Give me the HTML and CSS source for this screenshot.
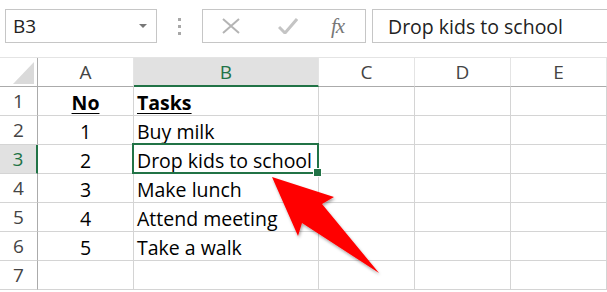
FILE: index.html
```html
<!DOCTYPE html>
<html lang="en">
<head>
    <meta charset="UTF-8">
    <meta name="viewport" content="width=device-width, initial-scale=1.0">
    <title>Tasks</title>
    <link rel="stylesheet" href="styles.css">
</head>
<body>

    <!-- Barra de nombre y fórmula -->
    <div class="barra">
        <div class="nombre">
            <span>B3</span>
            <span class="flecha"></span>
        </div>
        <div class="puntos">
            <i></i><i></i><i></i>
        </div>
        <div class="botones">
            <svg class="icono" width="18" height="16" viewBox="0 0 18 16">
                <path d="M1 1 L17 15 M17 1 L1 15" stroke="#b4b4b4" stroke-width="2" fill="none"/>
            </svg>
            <svg class="icono" width="20" height="16" viewBox="0 0 20 16">
                <path d="M1 9 L7 15 L19 1" stroke="#c4c4c4" stroke-width="3" fill="none"/>
            </svg>
            <span class="fx">fx</span>
        </div>
        <div class="formula">Drop kids to school</div>
    </div>

    <!-- Hoja -->
    <div class="hoja">
        <div class="esquina"><span class="triangulo"></span></div>
        <div class="col">A</div>
        <div class="col sel">B</div>
        <div class="col">C</div>
        <div class="col">D</div>
        <div class="col">E</div>

        <div class="fila">1</div>
        <div class="celda centro"><b><u>No</u></b></div>
        <div class="celda"><b><u>Tasks</u></b></div>
        <div class="celda"></div>
        <div class="celda"></div>
        <div class="celda"></div>

        <div class="fila">2</div>
        <div class="celda centro">1</div>
        <div class="celda">Buy milk</div>
        <div class="celda"></div>
        <div class="celda"></div>
        <div class="celda"></div>

        <div class="fila sel">3</div>
        <div class="celda centro">2</div>
        <div class="celda activa">Drop kids to school</div>
        <div class="celda"></div>
        <div class="celda"></div>
        <div class="celda"></div>

        <div class="fila">4</div>
        <div class="celda centro">3</div>
        <div class="celda">Make lunch</div>
        <div class="celda"></div>
        <div class="celda"></div>
        <div class="celda"></div>

        <div class="fila">5</div>
        <div class="celda centro">4</div>
        <div class="celda">Attend meeting</div>
        <div class="celda"></div>
        <div class="celda"></div>
        <div class="celda"></div>

        <div class="fila">6</div>
        <div class="celda centro">5</div>
        <div class="celda">Take a walk</div>
        <div class="celda"></div>
        <div class="celda"></div>
        <div class="celda"></div>

        <div class="fila">7</div>
        <div class="celda"></div>
        <div class="celda"></div>
        <div class="celda"></div>
        <div class="celda"></div>
        <div class="celda"></div>
    </div>

    <!-- Flecha roja -->
    <svg class="aviso" width="607" height="292" viewBox="0 0 607 292">
        <defs>
            <filter id="sombra" x="-20%" y="-20%" width="140%" height="140%">
                <feDropShadow dx="1" dy="2" stdDeviation="1.5" flood-color="#000" flood-opacity="0.35"/>
            </filter>
        </defs>
        <polygon points="272,177 334,197 322,204 379,273 302,223 298,236" fill="#ff0000" filter="url(#sombra)"/>
    </svg>

</body>
</html>
```

FILE: styles.css
```css
body, html {
    margin: 0;
    padding: 0;
    height: 100%;
    overflow: hidden;
    background: #fff;
}
body {
    position: relative;
    font-family: "Open Sans", "Noto Sans", sans-serif;
}

/* Barra superior */
.barra {
    display: flex;
    align-items: center;
    height: 34px;
    padding: 9px 0 0 5px;
    border-top: 1px solid #f0f0f0;
    margin-top: -1px;
}
.nombre {
    border: 1px solid #c6c6c6;
    display: flex;
    align-items: center;
    justify-content: space-between;
    padding: 0 9px 0 7px;
    box-sizing: border-box;
    width: 152px;
    height: 34px;
    font-size: 19px;
    color: #222;
}
.flecha {
    width: 0;
    height: 0;
    border-left: 4px solid transparent;
    border-right: 4px solid transparent;
    border-top: 4px solid #777;
}
.puntos {
    width: 45px;
    display: flex;
    flex-direction: column;
    align-items: center;
    gap: 4px;
}
.puntos i {
    width: 3px;
    height: 3px;
    background: #a8a8a8;
}
.botones {
    width: 164px;
    height: 34px;
    box-sizing: border-box;
    border: 1px solid #c6c6c6;
    display: flex;
    align-items: center;
    padding-left: 19px;
}
.icono { margin-right: 38px; }
.icono + .icono { margin-right: 33px; }
.fx {
    font-family: "Liberation Serif", serif;
    font-style: italic;
    font-size: 21px;
    color: #777;
    letter-spacing: -1px;
}
.formula {
    flex: 1;
    height: 34px;
    box-sizing: border-box;
    border: 1px solid #c6c6c6;
    border-right: none;
    margin-left: 6px;
    padding-left: 15px;
    display: flex;
    align-items: center;
    font-size: 19.5px;
    color: #222;
}

/* Hoja */
.hoja {
    margin-top: 14px;
    display: grid;
    grid-template-columns: 38px 96px 185px 96px 96px 1fr;
    grid-auto-rows: 29px;
    border-top: 1px solid #e4e4e4;
}
.esquina, .col {
    border-right: 1px solid #e4e4e4;
    border-bottom: 1px solid #ababab;
    height: 28px;
}
.esquina {
    position: relative;
    border-right-color: #ababab;
}
.triangulo {
    position: absolute;
    right: 3px;
    bottom: 2px;
    width: 0;
    height: 0;
    border-left: 21px solid transparent;
    border-bottom: 22px solid #dadada;
}
.col {
    display: flex;
    align-items: center;
    justify-content: center;
    font-size: 19px;
    color: #444;
}
.col.sel {
    background: #e1e1e1;
    border-bottom: 2px solid #217346;
    height: 27px;
    color: #217346;
}
.fila {
    border-right: 1px solid #ababab;
    border-bottom: 1px solid #d4d4d4;
    display: flex;
    align-items: center;
    justify-content: center;
    font-size: 19px;
    color: #444;
}
.fila.sel {
    background: #e1e1e1;
    border-right: 2px solid #217346;
    color: #217346;
}
.celda {
    border-right: 1px solid #d4d4d4;
    border-bottom: 1px solid #d4d4d4;
    display: flex;
    align-items: center;
    padding: 2px 0 0 3px;
    font-size: 19.5px;
    color: #000;
    white-space: nowrap;
}
.celda.centro {
    justify-content: center;
    padding-left: 0;
}
.celda u { text-underline-offset: 3px; }
.activa { position: relative; }
.activa::after {
    content: "";
    position: absolute;
    left: -2px;
    top: -2px;
    right: -1px;
    bottom: -1px;
    border: 2px solid #217346;
}
.activa::before {
    content: "";
    position: absolute;
    right: -4px;
    bottom: -4px;
    width: 7px;
    height: 7px;
    background: #217346;
    border: 1px solid #fff;
    z-index: 1;
}

/* Flecha roja encima */
.aviso {
    position: absolute;
    top: 0;
    left: 0;
    pointer-events: none;
}
```
